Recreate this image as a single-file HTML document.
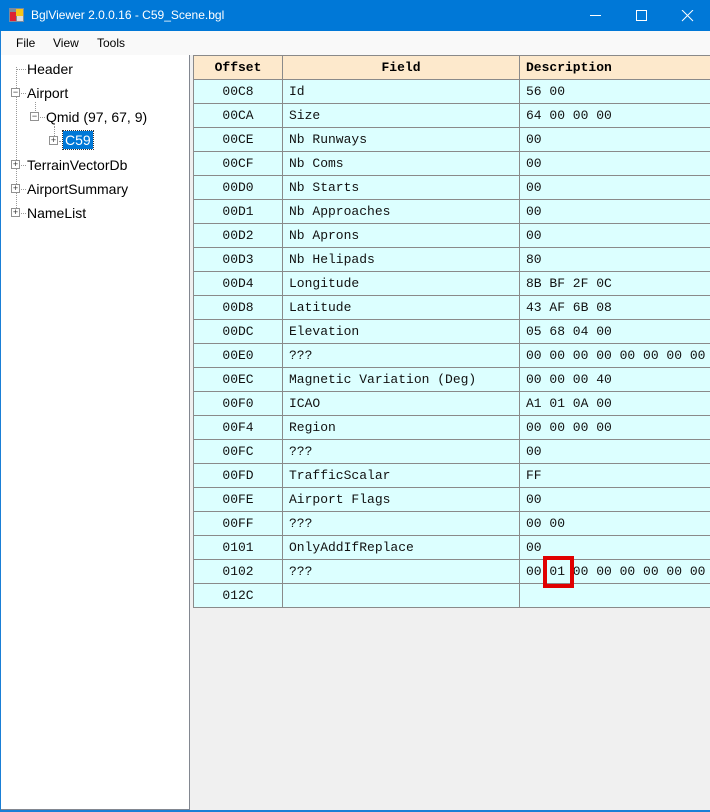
<!DOCTYPE html>
<html><head><meta charset="utf-8"><style>
*{margin:0;padding:0;box-sizing:border-box}
body{width:710px;height:812px;overflow:hidden;background:#1a7fd6;position:relative;font-family:"Liberation Sans",sans-serif}
#title{position:absolute;left:0;top:0;width:710px;height:31px;background:#0078d7;color:#fff;font-size:12px}
#title .t{position:absolute;left:31px;top:8px}
#menu{position:absolute;left:1px;top:31px;width:709px;height:24px;background:#f9f9f9;font-size:12px}
#menu span{position:absolute;top:5px}
#tree{position:absolute;left:1px;top:55px;width:189px;height:755px;background:#fff;border-right:1px solid #828790;border-bottom:1px solid #828790;font-size:14px}
#tree .n{position:absolute;white-space:nowrap}
.box{position:absolute;width:9px;height:9px;border:1px solid #919191;background:#fff;font-size:9px;line-height:7px;text-align:center;color:#333}
.vd{position:absolute;border-left:1px dotted #999;width:0}
.hd{position:absolute;border-top:1px dotted #999;height:0}
#grid{position:absolute;left:190px;top:55px;width:520px;height:755px;background:#f0f0f0;overflow:hidden}
table{border-collapse:collapse;font-family:"Liberation Mono",monospace;font-size:13px;position:absolute;left:3px;top:0;table-layout:fixed;width:540px}
td,th{border:1px solid #8a8a8a;height:24px;white-space:nowrap;overflow:hidden}
th{background:#fde9cc;font-weight:bold;text-align:center}
td{background:#dcffff;padding-left:6px;color:#111}
td.o{text-align:center;padding:0}
</style></head><body>
<div id="title"><svg style="position:absolute;left:9px;top:7px" width="16" height="16"><rect x="0" y="1" width="15" height="14" fill="#7a8aa0"/><rect x="1" y="5" width="6" height="9" fill="#d23"/><rect x="7" y="2" width="7" height="7" fill="#f5c518"/><rect x="8" y="9" width="6" height="5" fill="#ddd"/></svg><span class="t">BglViewer 2.0.0.16 - C59_Scene.bgl</span>
<svg style="position:absolute;left:590px;top:10px" width="110" height="12"><line x1="0" y1="5.5" x2="11" y2="5.5" stroke="#fff"/><rect x="46.5" y="0.5" width="10" height="10" fill="none" stroke="#fff"/><path d="M92 0L103 11M103 0L92 11" stroke="#fff"/></svg></div>
<div id="menu"><span style="left:15px">File</span><span style="left:52px">View</span><span style="left:96px">Tools</span></div>
<div id="tree">
<div class="vd" style="left:15px;top:12px;height:147px"></div>
<div class="hd" style="left:15px;top:14px;width:10px"></div>
<div class="n" style="left:26px;top:6px">Header</div>
<div class="box" style="left:10px;top:33px">−</div><div class="hd" style="left:20px;top:38px;width:5px"></div>
<div class="n" style="left:26px;top:30px">Airport</div>
<div class="vd" style="left:34px;top:47px;height:13px"></div>
<div class="box" style="left:29px;top:57px">−</div><div class="hd" style="left:39px;top:62px;width:5px"></div>
<div class="n" style="left:45px;top:54px">Qmid (97, 67, 9)</div>
<div class="vd" style="left:53px;top:71px;height:10px"></div>
<div class="box" style="left:48px;top:81px">+</div><div class="hd" style="left:58px;top:86px;width:4px"></div>
<div class="n" style="left:62px;top:76px;background:#0078d7;color:#fff;padding:1px 2px;outline:1px dotted #333">C59</div>
<div class="box" style="left:10px;top:105px">+</div><div class="hd" style="left:20px;top:110px;width:5px"></div>
<div class="n" style="left:26px;top:102px">TerrainVectorDb</div>
<div class="box" style="left:10px;top:129px">+</div><div class="hd" style="left:20px;top:134px;width:5px"></div>
<div class="n" style="left:26px;top:126px">AirportSummary</div>
<div class="box" style="left:10px;top:153px">+</div><div class="hd" style="left:20px;top:158px;width:5px"></div>
<div class="n" style="left:26px;top:150px">NameList</div>
</div>
<div id="grid">
<table><colgroup><col style="width:89px"><col style="width:237px"><col style="width:214px"></colgroup>
<tr><th>Offset</th><th>Field</th><th style="text-align:left;padding-left:6px">Description</th></tr>
<tr><td class="o">00C8</td><td>Id</td><td>56 00</td></tr>
<tr><td class="o">00CA</td><td>Size</td><td>64 00 00 00</td></tr>
<tr><td class="o">00CE</td><td>Nb Runways</td><td>00</td></tr>
<tr><td class="o">00CF</td><td>Nb Coms</td><td>00</td></tr>
<tr><td class="o">00D0</td><td>Nb Starts</td><td>00</td></tr>
<tr><td class="o">00D1</td><td>Nb Approaches</td><td>00</td></tr>
<tr><td class="o">00D2</td><td>Nb Aprons</td><td>00</td></tr>
<tr><td class="o">00D3</td><td>Nb Helipads</td><td>80</td></tr>
<tr><td class="o">00D4</td><td>Longitude</td><td>8B BF 2F 0C</td></tr>
<tr><td class="o">00D8</td><td>Latitude</td><td>43 AF 6B 08</td></tr>
<tr><td class="o">00DC</td><td>Elevation</td><td>05 68 04 00</td></tr>
<tr><td class="o">00E0</td><td>???</td><td>00 00 00 00 00 00 00 00</td></tr>
<tr><td class="o">00EC</td><td>Magnetic Variation (Deg)</td><td>00 00 00 40</td></tr>
<tr><td class="o">00F0</td><td>ICAO</td><td>A1 01 0A 00</td></tr>
<tr><td class="o">00F4</td><td>Region</td><td>00 00 00 00</td></tr>
<tr><td class="o">00FC</td><td>???</td><td>00</td></tr>
<tr><td class="o">00FD</td><td>TrafficScalar</td><td>FF</td></tr>
<tr><td class="o">00FE</td><td>Airport Flags</td><td>00</td></tr>
<tr><td class="o">00FF</td><td>???</td><td>00 00</td></tr>
<tr><td class="o">0101</td><td>OnlyAddIfReplace</td><td>00</td></tr>
<tr><td class="o">0102</td><td>???</td><td>00 01 00 00 00 00 00 00</td></tr>
<tr><td class="o">012C</td><td></td><td></td></tr>
</table>
<div style="position:absolute;left:353px;top:501px;width:31px;height:32px;border:4px solid #e00000"></div>
</div>
</body></html>
